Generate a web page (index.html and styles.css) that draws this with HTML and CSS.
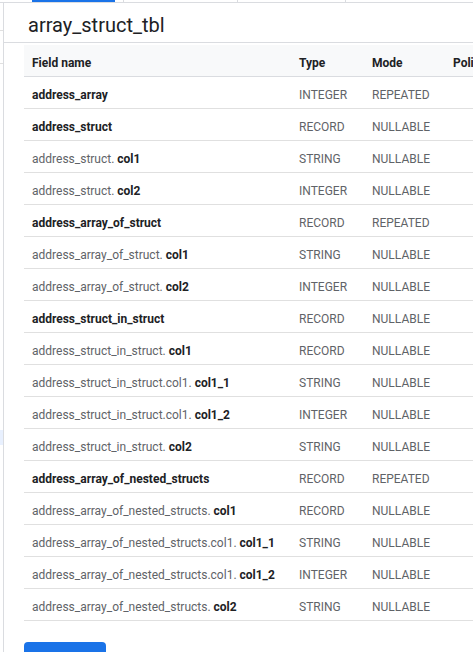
FILE: index.html
```html
<!DOCTYPE html>
<html>
<head>
<meta charset="utf-8">
<link rel="stylesheet" href="styles.css">
</head>
<body>
<div class="toolbar">
  <div class="tb-run">Run</div>
  <div class="tb-sep"></div>
  <div class="tb-item tb-save">Save query</div>
  <div class="tb-sep"></div>
  <div class="tb-item tb-view">Save view</div>
  <div class="tb-sep"></div>
  <div class="tb-item tb-sched">Schedule query</div>
  <div class="tb-sep tb-last"></div>
</div>
<div class="main">
  <div class="gutter">
    <div class="g-line g1"></div>
    <div class="g-line g2"></div>
    <div class="g-blue"></div>
  </div>
  <div class="panel">
    <div class="title">array_struct_tbl</div>
    <div class="content">
      <div class="table">
        <div class="row head">
          <div class="c name">Field name</div>
          <div class="c type">Type</div>
          <div class="c mode">Mode</div>
          <div class="c pol">Policy tags</div>
        </div>
        <div class="row"><div class="c name"><b>address_array</b></div><div class="c type">INTEGER</div><div class="c mode">REPEATED</div><div class="c pol"></div></div>
        <div class="row"><div class="c name"><b>address_struct</b></div><div class="c type">RECORD</div><div class="c mode">NULLABLE</div><div class="c pol"></div></div>
        <div class="row"><div class="c name">address_struct. <b>col1</b></div><div class="c type">STRING</div><div class="c mode">NULLABLE</div><div class="c pol"></div></div>
        <div class="row"><div class="c name">address_struct. <b>col2</b></div><div class="c type">INTEGER</div><div class="c mode">NULLABLE</div><div class="c pol"></div></div>
        <div class="row"><div class="c name"><b>address_array_of_struct</b></div><div class="c type">RECORD</div><div class="c mode">REPEATED</div><div class="c pol"></div></div>
        <div class="row"><div class="c name">address_array_of_struct. <b>col1</b></div><div class="c type">STRING</div><div class="c mode">NULLABLE</div><div class="c pol"></div></div>
        <div class="row"><div class="c name">address_array_of_struct. <b>col2</b></div><div class="c type">INTEGER</div><div class="c mode">NULLABLE</div><div class="c pol"></div></div>
        <div class="row"><div class="c name"><b>address_struct_in_struct</b></div><div class="c type">RECORD</div><div class="c mode">NULLABLE</div><div class="c pol"></div></div>
        <div class="row"><div class="c name">address_struct_in_struct. <b>col1</b></div><div class="c type">RECORD</div><div class="c mode">NULLABLE</div><div class="c pol"></div></div>
        <div class="row"><div class="c name">address_struct_in_struct.col1. <b>col1_1</b></div><div class="c type">STRING</div><div class="c mode">NULLABLE</div><div class="c pol"></div></div>
        <div class="row"><div class="c name">address_struct_in_struct.col1. <b>col1_2</b></div><div class="c type">INTEGER</div><div class="c mode">NULLABLE</div><div class="c pol"></div></div>
        <div class="row"><div class="c name">address_struct_in_struct. <b>col2</b></div><div class="c type">STRING</div><div class="c mode">NULLABLE</div><div class="c pol"></div></div>
        <div class="row"><div class="c name"><b>address_array_of_nested_structs</b></div><div class="c type">RECORD</div><div class="c mode">REPEATED</div><div class="c pol"></div></div>
        <div class="row"><div class="c name">address_array_of_nested_structs. <b>col1</b></div><div class="c type">RECORD</div><div class="c mode">NULLABLE</div><div class="c pol"></div></div>
        <div class="row"><div class="c name">address_array_of_nested_structs.col1. <b>col1_1</b></div><div class="c type">STRING</div><div class="c mode">NULLABLE</div><div class="c pol"></div></div>
        <div class="row"><div class="c name">address_array_of_nested_structs.col1. <b>col1_2</b></div><div class="c type">INTEGER</div><div class="c mode">NULLABLE</div><div class="c pol"></div></div>
        <div class="row"><div class="c name">address_array_of_nested_structs. <b>col2</b></div><div class="c type">STRING</div><div class="c mode">NULLABLE</div><div class="c pol"></div></div>
      </div>
      <button class="btn">Edit schema</button>
    </div>
  </div>
</div>
</body>
</html>
```

FILE: styles.css
```css
html, body {
  margin: 0;
  padding: 0;
  background: #ffffff;
  overflow: hidden;
  width: 473px;
  height: 652px;
}
body {
  font-family: Roboto, "Liberation Sans", Arial, sans-serif;
  color: #202124;
}
.toolbar {
  height: 2px;
  overflow: hidden;
  border-bottom: 1px solid #dadce0;
  display: flex;
  align-items: flex-end;
  background: #fff;
}
.tb-run {
  margin-left: 32px;
  width: 83px;
  height: 20px;
  background: #1a73e8;
  color: #fff;
  font-size: 13px;
  line-height: 20px;
  flex: none;
}
.tb-sep {
  width: 1px;
  height: 20px;
  background: #dadce0;
  flex: none;
  margin-left: 8px;
}
.tb-item {
  font-size: 13px;
  line-height: 15px;
  height: 17px;
  color: #3c4043;
  flex: none;
  white-space: nowrap;
}
.tb-save { margin-left: 12px; width: 93px; }
.tb-view { margin-left: 32px; width: 67px; }
.tb-sched { margin-left: 10px; width: 124px; padding-left: 0; }
.tb-last { margin-left: 0; }

.main {
  display: flex;
  height: 649px;
}
.gutter {
  width: 3px;
  flex: none;
  display: flex;
  flex-direction: column;
  background: #fff;
}
.g-line {
  height: 1px;
  background: #e0e0e0;
}
.g1 { margin-top: 27px; }
.g2 { margin-top: 32px; }
.g-blue {
  margin-top: 366px;
  height: 15px;
  background: #e8f0fe;
}
.panel {
  flex: 1;
  min-width: 0;
  border-left: 1px solid #dadce0;
  background: #fff;
  overflow: hidden;
}
.title {
  height: 40px;
  box-sizing: border-box;
  padding: 10px 0 0 24px;
  font-size: 20px;
  line-height: 24px;
  color: #202124;
  border-bottom: 1px solid #dadce0;
}
.content {
  padding: 2px 0 0 20px;
}
.table {
  width: 600px;
}
.row {
  display: grid;
  grid-template-columns: 267px 73px 81px 179px;
  height: 32px;
  box-sizing: border-box;
  border-bottom: 1px solid #e0e0e0;
  align-items: center;
}
.row.head {
  background: #f8f9fa;
  border-bottom: 1px solid #dadce0;
}
.c {
  padding-left: 8px;
  padding-top: 4px;
  font-size: 12px;
  line-height: 16px;
  white-space: nowrap;
  overflow: hidden;
}
.row.head .c {
  color: #202124;
  font-weight: bold;
}
.name {
  color: #5f6368;
}
.name b {
  color: #202124;
  font-weight: bold;
}
.type, .mode {
  color: #5f6368;
}
.btn {
  margin-top: 21px;
  width: 82px;
  height: 36px;
  border: none;
  border-radius: 4px;
  background: #1a73e8;
  color: #fff;
  font-family: Roboto, "Liberation Sans", Arial, sans-serif;
  font-size: 14px;
  font-weight: 500;
  padding: 2px 0 0 9px;
  text-align: left;
  line-height: 20px;
  white-space: nowrap;
  overflow: hidden;
  display: block;
}
```
